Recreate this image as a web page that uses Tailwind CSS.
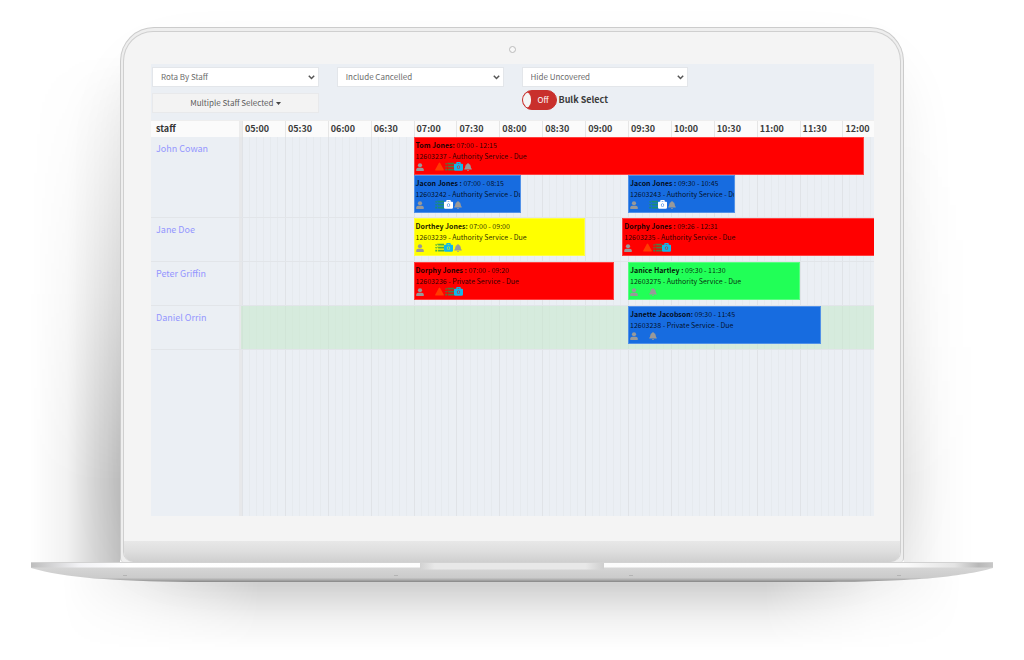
<!DOCTYPE html>
<html lang="en">
<head>
    <meta charset="UTF-8">
    <meta name="viewport" content="width=device-width, initial-scale=1.0">
    <title>Staff Rota</title>
    <script src="https://cdn.jsdelivr.net/npm/@tailwindcss/browser@4"></script>
</head>
<body class="bg-white font-['Noto_Sans_CJK_SC','Open_Sans',sans-serif] text-[8px] text-[#6c6c6c]">

<!-- icon sprites -->
<svg class="hidden" aria-hidden="true">
    <symbol id="i-user" viewBox="0 0 16 16"><circle cx="8" cy="4.500" r="4.200"/><path d="M.5 16v-3q0-3.500 4-3.500h7q4 0 4 3.500v3z"/></symbol>
    <symbol id="i-warn" viewBox="0 0 16 16"><path d="M8 1q.8 0 1.200.7l6.500 12q.6 1.300-.8 1.600H1.100q-1.400-.3-.8-1.600l6.500-12Q7.200 1 8 1z"/></symbol>
    <symbol id="i-list" viewBox="0 0 16 16"><path d="M5.500 1.500H16v3H5.500zM5.500 6.700H16v3H5.500zM5.500 12H16v3H5.500zM0 3l1-1 1 1 2.300-2 .9 1L2 5.200zM0 8l1-1 1 1 2.300-2 .9 1L2 10.200zM.5 12h3.500v3H.5z"/></symbol>
    <symbol id="i-kit" viewBox="0 0 16 16"><path fill-rule="evenodd" d="M4 3V1.500Q4 0 5.500 0h5Q12 0 12 1.500V3h2.500Q16 3 16 4.500v9q0 2-1.500 2h-13Q0 15.500 0 13.500v-9Q0 3 1.500 3zm2.500 0h3v-.8h-3zM8 6a3 3 0 1 0 0 6 3 3 0 0 0 0-6zM7 7h2v1h1v2H9v1H7v-1H6V8h1z"/></symbol>
    <symbol id="i-bell" viewBox="0 0 16 16"><path d="M7 0h2v1.600q4.500.9 4.500 5.400 0 3.300 2 4.500V13H.5v-1.500Q2.500 10.300 2.500 7q0-4.500 4.500-5.400zM6 14h4q-.4 2-2 2t-2-2z"/></symbol>
</svg>

<main class="relative isolate min-h-screen overflow-hidden px-[31px] pt-[27px]">
    <div class="relative mx-[89px]">
        <!-- side shadows -->
        <div class="absolute inset-x-1 top-8 bottom-0 -z-10 rounded-[60px] shadow-[0_0_60px_rgba(0,0,0,0.08)]"></div>
        <div class="absolute top-0 right-full bottom-0 -z-10 w-[90px] bg-[linear-gradient(to_left,rgba(0,0,0,0.24),rgba(0,0,0,0.16)_28%,rgba(0,0,0,0.05)_60%,transparent)] [mask-image:linear-gradient(to_bottom,transparent_5%,rgba(0,0,0,0.5)_50%,black_85%)]"></div>
        <div class="absolute top-0 bottom-0 left-full -z-10 w-[70px] bg-[linear-gradient(to_right,rgba(0,0,0,0.07),rgba(0,0,0,0.02)_50%,transparent)] [mask-image:linear-gradient(to_bottom,transparent_20%,rgba(0,0,0,0.5)_60%,black_85%)]"></div>

        <!-- lid -->
        <div class="rounded-t-[34px] rounded-b-[4px] border border-b-0 border-[#cbcbcb] bg-[#eeeeee] px-[2px] pt-[3px]">
            <div class="overflow-hidden rounded-t-[30px] rounded-b-[10px] border border-b-0 border-[#cfcfcf] bg-[#f4f4f4]">
                <div class="flex h-8 items-center justify-center">
                    <span class="mt-0.5 size-[7px] rounded-full border border-[#bbb] bg-[#f8f8f8]"></span>
                </div>

                <div class="mr-[26px] ml-[27px] flex min-h-[452px] flex-col bg-[#ebeff4]">
                    <form class="grid grid-cols-4 gap-x-[18px] gap-y-[5px] px-px pt-[3px] pb-[7px]">
                        <div class="relative">
                            <select aria-label="Rota view" class="block h-5 w-full appearance-none border border-[#e3e6ea] bg-white px-2 leading-4">
                                <option>Rota By Staff</option>
                            </select>
                            <svg class="pointer-events-none absolute top-2 right-1 h-[5px] w-[7px] fill-none stroke-[#555] stroke-[1.500]" viewBox="0 0 7 5"><path d="M.8.8l2.700 2.700L6.200.8"/></svg>
                        </div>
                        <div class="relative">
                            <select aria-label="Cancelled visits" class="block h-5 w-full appearance-none border border-[#e3e6ea] bg-white px-2 leading-4">
                                <option>Include Cancelled</option>
                            </select>
                            <svg class="pointer-events-none absolute top-2 right-1 h-[5px] w-[7px] fill-none stroke-[#555] stroke-[1.500]" viewBox="0 0 7 5"><path d="M.8.8l2.700 2.700L6.200.8"/></svg>
                        </div>
                        <div class="relative">
                            <select aria-label="Uncovered visits" class="block h-5 w-full appearance-none border border-[#e3e6ea] bg-white px-2 leading-4">
                                <option>Hide Uncovered</option>
                            </select>
                            <svg class="pointer-events-none absolute top-2 right-1 h-[5px] w-[7px] fill-none stroke-[#555] stroke-[1.500]" viewBox="0 0 7 5"><path d="M.8.8l2.700 2.700L6.200.8"/></svg>
                        </div>
                        <button type="button" class="col-start-1 mt-px flex h-5 items-center justify-center gap-[2px] border border-[#e8e9eb] bg-[#f3f3f3] leading-4 text-[#5c5c5c]">
                            Multiple Staff Selected
                            <svg class="h-[3px] w-[5px] fill-[#444]" viewBox="0 0 5 3"><path d="M0 0h5L2.500 3z"/></svg>
                        </button>
                        <label class="col-start-3 -mt-[2px] flex h-5 items-center gap-[2px] text-[9px] leading-4 font-bold text-[#3c3c3c]">
                            <input type="checkbox" class="sr-only">
                            <span class="flex h-5 w-[35px] overflow-hidden rounded-full border border-[#c9302c] bg-[#c9302c] text-[8px] leading-[18px] font-normal text-white">
                                <span class="w-2 rounded-r-full bg-[#f5f5f5]"></span>
                                <span class="flex-1 text-center">Off</span>
                            </span>
                            Bulk Select
                        </label>
                    </form>

                    <!-- timeline header -->
                    <div class="flex h-[17px] border-t border-[#eee] bg-[#fbfbfb] text-[9px] leading-4 font-bold text-[#3c3c3c]">
                        <div class="w-[88px] pl-[5px] text-[#333]">staff</div>
                        <div class="w-[3px] bg-[#ececec]"></div>
                        <div id="hours" class="flex min-w-0 flex-1 overflow-hidden"></div>
                    </div>

                    <div class="relative flex-1">
                        <div class="absolute inset-0 flex">
                            <div class="w-[88px]"></div>
                            <div class="w-[3px] bg-[#e7e8ea]"></div>
                            <div id="gridlines" class="flex min-w-0 flex-1 overflow-hidden"></div>
                        </div>
                        <div id="rows" class="relative"></div>
                    </div>
                </div>

                <div class="h-[25px]"></div>
                <div class="h-[21px] bg-linear-to-b from-[#e8e8e8] via-[#dedede] to-[#cfcfcf]"></div>
            </div>
        </div>
    </div>

    <!-- base -->
    <div class="relative">
        <div class="absolute inset-x-[30px] top-3 -z-10 h-[76px] bg-[linear-gradient(to_bottom,rgba(0,0,0,0.2),rgba(0,0,0,0.14)_25%,rgba(0,0,0,0.05)_60%,transparent)] [mask-image:linear-gradient(to_right,transparent,rgba(0,0,0,0.35)_9%,black_22%,black_78%,rgba(0,0,0,0.3)_90%,transparent)] blur-[5px]"></div>
        <svg class="block h-5 w-full" viewBox="0 0 962 20" preserveAspectRatio="none">
            <defs>
                <linearGradient id="under" x2="0" y2="1">
                    <stop offset="0.250" stop-color="#d6d6d6"/><stop offset="0.780" stop-color="#cbcbcb"/><stop offset="0.900" stop-color="#a9a9a9"/><stop offset="1" stop-color="#858585"/>
                </linearGradient>
                <linearGradient id="deck">
                    <stop offset="0" stop-color="#bdbdbd"/><stop offset="0.050" stop-color="#f2f2f5"/><stop offset="0.100" stop-color="#fff"/>
                    <stop offset="0.910" stop-color="#fafafa"/><stop offset="0.960" stop-color="#e4e4e4"/><stop offset="0.985" stop-color="#b8b8b8"/><stop offset="1" stop-color="#c8c8c8"/>
                </linearGradient>
                <linearGradient id="notch">
                    <stop offset="0" stop-color="#d2d2d2"/><stop offset="0.080" stop-color="#e8e8e8"/><stop offset="0.900" stop-color="#e8e8e8"/><stop offset="1" stop-color="#cecece"/>
                </linearGradient>
            </defs>
            <path fill="url(#under)" d="M0 0H962V6C930 15 880 20 780 20H160C80 19 35 16 0 6z"/>
            <path fill="url(#deck)" d="M0 1H962V5.500H0z"/>
            <path fill="#d2d2d2" d="M0 0H962V1H0z"/>
            <path fill="url(#notch)" d="M389 1H573V7.500H389z"/>
            <path fill="#b4b4b4" d="M92 13h4v1h-4zM363 13h4v1h-4zM598 13h4v1h-4zM866 13h4v1h-4z"/>
        </svg>
    </div>
</main>

<script>
const dayStart = 300, visibleMinutes = 442;
const percent = minutes => minutes / visibleMinutes * 100 + '%';

const colours = {
    red: 'bg-[#ff0000]',
    blue: 'bg-[#176ce0]',
    yellow: 'bg-[#ffff00]',
    green: 'bg-[#21ff57]'
};

const staff = [
    {name: 'John Cowan', lanes: [
        [{client: 'Tom Jones:', time: '07:00 - 12:15', ref: '12603237 - Authority Service - Due', colour: 'red', start: 420, end: 735, icons: ['warn', 'list', 'kit', 'bell']}],
        [{client: 'Jacon Jones :', time: '07:00 - 08:15', ref: '12603242 - Authority Service - Due', colour: 'blue', start: 420, end: 495, icons: ['list', 'kitWhite', 'bell']},
         {client: 'Jacon Jones :', time: '09:30 - 10:45', ref: '12603243 - Authority Service - Due', colour: 'blue', start: 570, end: 645, icons: ['list', 'kitWhite', 'bell']}]
    ]},
    {name: 'Jane Doe', lanes: [
        [{client: 'Dorthey Jones:', time: '07:00 - 09:00', ref: '12603239 - Authority Service - Due', colour: 'yellow', start: 420, end: 540, icons: ['list', 'kit', 'bell']},
         {client: 'Dorphy Jones :', time: '09:26 - 12:31', ref: '12603235 - Authority Service - Due', colour: 'red', start: 566, end: 751, icons: ['warn', 'list', 'kit']}]
    ]},
    {name: 'Peter Griffin', lanes: [
        [{client: 'Dorphy Jones :', time: '07:00 - 09:20', ref: '12603236 - Private Service - Due', colour: 'red', start: 420, end: 560, icons: ['warn', 'list', 'kit']},
         {client: 'Janice Hartley :', time: '09:30 - 11:30', ref: '12603275 - Authority Service - Due', colour: 'green', start: 570, end: 690, icons: ['bell']}]
    ]},
    {name: 'Daniel Orrin', highlight: true, lanes: [
        [{client: 'Janette Jacobson:', time: '09:30 - 11:45', ref: '12603238 - Private Service - Due', colour: 'blue', start: 570, end: 705, icons: ['bell']}]
    ]}
];

const icons = {
    warn: '<svg class="mr-px size-[9px] shrink-0 fill-[#ff3b00]"><use href="#i-warn"/></svg>',
    list: '<svg class="size-[9px] shrink-0 fill-[#1d9a55]/80"><use href="#i-list"/></svg>',
    kit: '<svg class="mr-px size-[9px] shrink-0 fill-[#10b8ea]"><use href="#i-kit"/></svg>',
    kitWhite: '<svg class="mr-px size-[9px] shrink-0 fill-white"><use href="#i-kit"/></svg>',
    bell: '<svg class="size-2 shrink-0 fill-[#999]"><use href="#i-bell"/></svg>'
};

const slots = Array.from({length: 15}, (_, i) => dayStart + i * 30);

document.getElementById('hours').innerHTML = slots.map(m => `
    <div class="shrink-0 border-l border-[#e6e6e6] pl-[2px]" style="width:${percent(30)}">${String(Math.floor(m / 60)).padStart(2, '0')}:${String(m % 60).padStart(2, '0')}</div>
`).join('');

document.getElementById('gridlines').innerHTML = slots.map(() => `
    <div class="grid shrink-0 grid-cols-6 border-l border-[#e0e3e7]" style="width:${percent(30)}">
        ${'<i class="border-r border-[#e6eaee] last:border-0"></i>'.repeat(6)}
    </div>
`).join('');

document.getElementById('rows').innerHTML = staff.map(person => `
    <div class="flex min-h-11 border-b border-[#e2e5e9]">
        <div class="w-[90px] pt-1 pl-[5px] text-[9px] leading-4"><a href="#" class="text-[#9496ff]">${person.name}</a></div>
        <div class="min-w-0 flex-1 overflow-hidden pb-1 pl-px ${person.highlight ? 'bg-[#c4e8cb]/55' : ''}">
            ${person.lanes.map(lane => `<div class="relative h-[38px]">${lane.map(visit => `
                <div class="absolute inset-y-0 overflow-hidden border border-white/25 px-px pt-[2px] text-[7px] leading-[11px] whitespace-nowrap text-black/85 ${colours[visit.colour]}" style="left:${percent(visit.start - dayStart)};width:${percent(visit.end - visit.start)}">
                    <p><b class="text-black/90">${visit.client}</b> ${visit.time}</p>
                    <p>${visit.ref}</p>
                    <div class="flex h-[9px] items-center">
                        <svg class="mr-[11px] size-2 shrink-0 fill-[#999]"><use href="#i-user"/></svg>
                        ${visit.icons.map(name => icons[name]).join('')}
                    </div>
                </div>`).join('')}</div>`).join('')}
        </div>
    </div>
`).join('');
</script>
</body>
</html>
